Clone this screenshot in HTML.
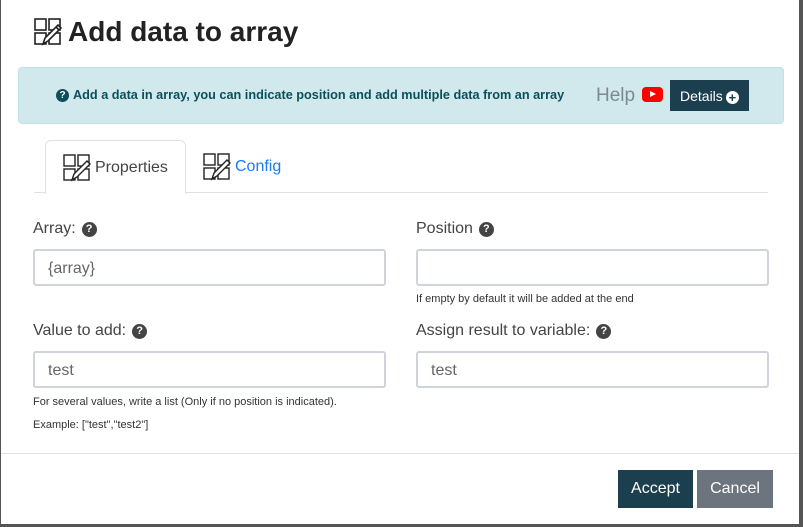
<!DOCTYPE html>
<html><head><style>
*{box-sizing:border-box;margin:0;padding:0}
body{width:803px;height:527px;background:#555;position:relative;overflow:hidden;font-family:"Liberation Sans",Arial,sans-serif;color:#333}
.m{position:absolute;left:1px;top:0;width:798px;height:524px;background:#fff}
.ic{display:inline-block;vertical-align:middle}
h1{position:absolute;left:33px;top:16px;font-size:28px;font-weight:bold;color:#222;display:flex;align-items:center;gap:6px}
.al{position:absolute;left:17px;top:67px;width:766px;height:57px;background:#d1e9ed;border:1px solid #bfe1e7;border-radius:4px}
.al .t{position:absolute;left:37px;top:20px;font-size:12.7px;font-weight:bold;color:#0c4f5a;display:flex;align-items:center;gap:4px}
.q{display:inline-block;width:13px;height:13px;border-radius:50%;background:#0c4f5a;color:#fff;font-size:10px;text-align:center;line-height:13px;font-weight:bold}
.help{position:absolute;left:577px;top:17px;font-size:19px;color:#7b8a90}
.yt{position:absolute;left:623px;top:19px;width:21px;height:15px;background:#f00;border-radius:4px}
.yt:after{content:"";position:absolute;left:8px;top:4px;border-left:6px solid #fff;border-top:3.5px solid transparent;border-bottom:3.5px solid transparent}
.det{position:absolute;left:651px;top:12px;width:79px;height:31px;background:#1c3f50;color:#fff;font-size:14px;padding:8px 0 0 10px}
.det b{display:inline-block;width:13px;height:13px;border-radius:50%;background:#fff;color:#1c3f50;font-size:13px;line-height:13px;text-align:center;margin-left:3px;vertical-align:-1px}
.tabs{position:absolute;left:33px;top:192px;width:734px;border-top:1px solid #dee2e6}
.tab1{position:absolute;left:44px;top:140px;width:141px;height:54px;border:1px solid #dee2e6;border-bottom:none;border-radius:6px 6px 0 0;background:#fff;font-size:16px;color:#444;display:flex;align-items:center;padding-left:17px;gap:4px}
.tab2{position:absolute;left:202px;top:153px;font-size:16px;color:#1a7cf0;display:flex;align-items:center;gap:4px}
.lb{position:absolute;font-size:16px;color:#444;display:flex;align-items:center;gap:6px}
.lb .q{background:#444;width:15px;height:15px;line-height:15px;font-size:11px}
.in{position:absolute;width:353px;height:37px;border:2px solid #ced4da;border-radius:3px;font-size:16px;color:#666;padding:9px 0 0 13px}
.sm{position:absolute;font-size:11px;color:#333}
.ft{position:absolute;left:0;top:453px;width:798px;border-top:1px solid #e3e3e3}
.b{position:absolute;top:470px;height:38px;color:#fff;font-size:16px;text-align:center;line-height:38px}
</style></head><body>
<div class="m">
<h1><svg class="ic" width="28" height="28" viewBox="0 0 28 28" fill="none" stroke="#222" stroke-width="1.6"><rect x="1" y="1" width="11" height="11"/><rect x="15" y="1" width="11" height="11"/><rect x="1" y="15" width="11" height="11"/><rect x="15" y="15" width="11" height="11"/><path d="M9 26l2-6 13-13 3 3-13 13z" fill="#fff"/><path d="M22 9l3 3"/></svg>Add data to array</h1>
<div class="al"><div class="t"><span class="q">?</span>Add a data in array, you can indicate position and add multiple data from an array</div>
<div class="help">Help</div><div class="yt"></div><div class="det">Details<b>+</b></div></div>
<div class="tabs"></div>
<div class="tab1"><svg width="28" height="28" viewBox="0 0 28 28" fill="none" stroke="#222" stroke-width="1.4"><rect x="1" y="1" width="11" height="11"/><rect x="15" y="1" width="11" height="11"/><rect x="1" y="15" width="11" height="11"/><rect x="15" y="15" width="11" height="11"/><path d="M9 26l2-6 13-13 3 3-13 13z" fill="#fff"/></svg>Properties</div>
<div class="tab2"><svg width="28" height="28" viewBox="0 0 28 28" fill="none" stroke="#222" stroke-width="1.4"><rect x="1" y="1" width="11" height="11"/><rect x="15" y="1" width="11" height="11"/><rect x="1" y="15" width="11" height="11"/><rect x="15" y="15" width="11" height="11"/><path d="M9 26l2-6 13-13 3 3-13 13z" fill="#fff"/></svg>Config</div>
<div class="lb" style="left:32px;top:220px">Array: <span class="q">?</span></div>
<div class="lb" style="left:415px;top:220px">Position <span class="q">?</span></div>
<div class="in" style="left:32px;top:249px">{array}</div>
<div class="in" style="left:415px;top:249px"></div>
<div class="sm" style="left:415px;top:293px">If empty by default it will be added at the end</div>
<div class="lb" style="left:32px;top:322px">Value to add: <span class="q">?</span></div>
<div class="lb" style="left:415px;top:322px">Assign result to variable: <span class="q">?</span></div>
<div class="in" style="left:32px;top:351px">test</div>
<div class="in" style="left:415px;top:351px">test</div>
<div class="sm" style="left:32px;top:396px">For several values, write a list (Only if no position is indicated).</div>
<div class="sm" style="left:32px;top:419px">Example: ["test","test2"]</div>
<div class="ft"></div>
<div class="b" style="left:617px;width:75px;background:#1c3f50">Accept</div>
<div class="b" style="left:696px;width:76px;background:#6c757d">Cancel</div>
</div>
</body></html>
